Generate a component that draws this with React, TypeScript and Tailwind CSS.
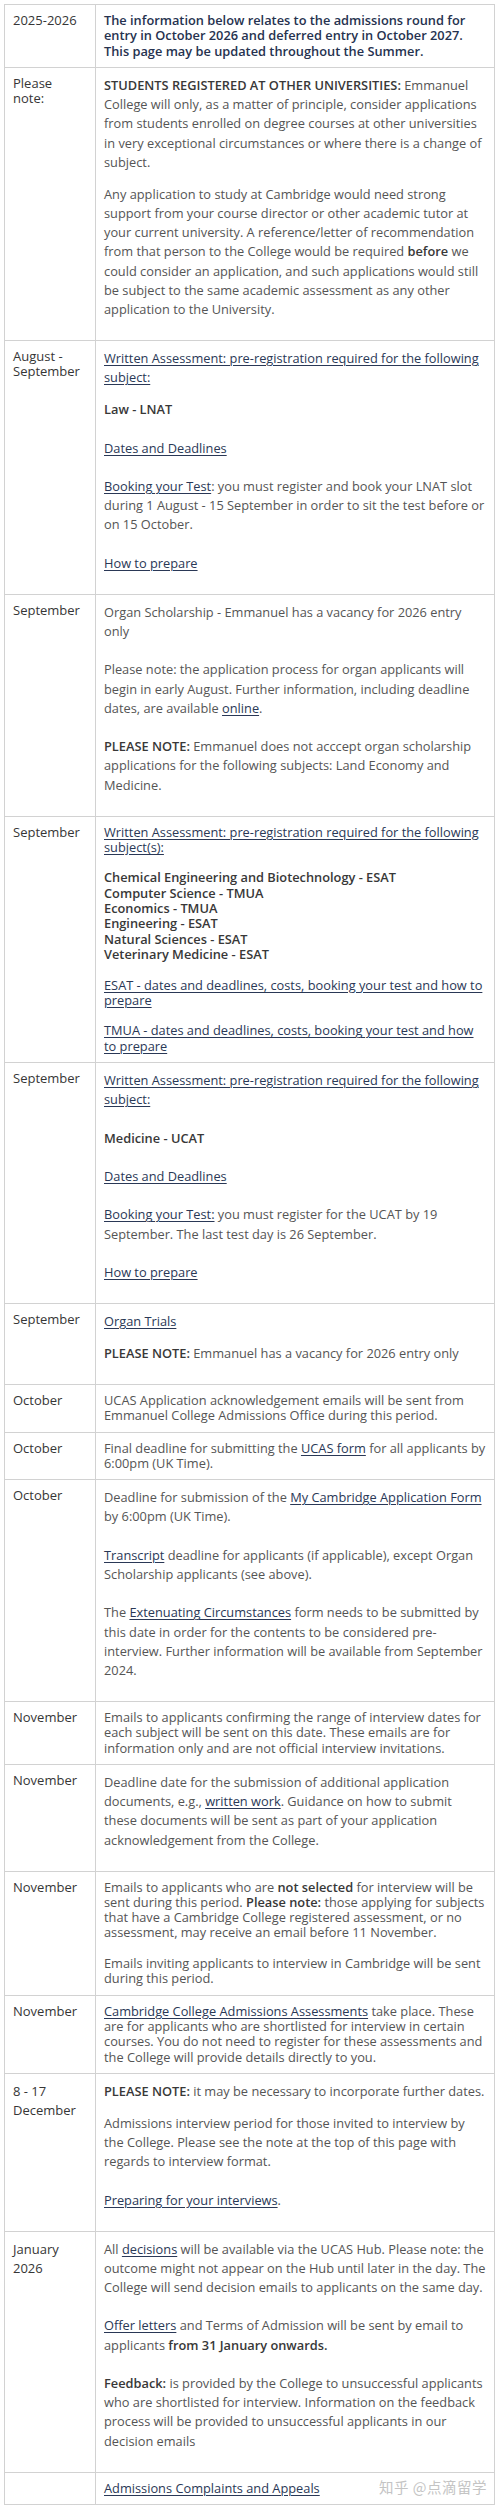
import React from 'react';

const A = ({ children }: { children: React.ReactNode }) => (
  <a href="#" className="text-[#2a3856] underline underline-offset-[2px] decoration-[1px]">
    {children}
  </a>
);

const B = ({ children }: { children: React.ReactNode }) => (
  <strong className="font-semibold text-[#383838]">{children}</strong>
);

const tight = 'leading-[15.3px]';
const loose = 'leading-[19.2px]';

type Row = { label: React.ReactNode; labelLoose?: boolean; body: React.ReactNode };

const rows: Row[] = [
  {
    label: '2025-2026',
    body: (
      <div className={`${tight} font-semibold text-[#26324f]`}>
        The information below relates to the admissions round for entry in October 2026 and deferred entry in October
        2027. This page may be updated throughout the Summer.
      </div>
    ),
  },
  {
    label: (
      <>
        Please
        <br />
        note:
      </>
    ),
    body: (
      <div className={loose}>
        <p className="mb-[12.8px]">
          <B>STUDENTS REGISTERED AT OTHER UNIVERSITIES:</B> Emmanuel College will only, as a matter of principle,
          consider applications from students enrolled on degree courses at other universities in very exceptional
          circumstances or where there is a change of subject.
        </p>
        <p className="mb-[12.8px]">
          Any application to study at Cambridge would need strong support from your course director or other academic
          tutor at your current university. A reference/letter of recommendation from that person to the College would
          be required <B>before</B> we could consider an application, and such applications would still be subject to
          the same academic assessment as any other application to the University.
        </p>
      </div>
    ),
  },
  {
    label: 'August - September',
    body: (
      <div className={loose}>
        <p className="mb-[12.8px]">
          <A>Written Assessment: pre-registration required for the following subject:</A>
        </p>
        <p className="mb-[12.8px]">
          <B>Law - LNAT</B>
          <br />
          <br />
          <A>Dates and Deadlines</A>
          <br />
          <br />
          <A>Booking your Test</A>: you must register and book your LNAT slot during 1 August - 15 September in order to
          sit the test before or on 15 October.
          <br />
          <br />
          <A>How to prepare</A>
        </p>
      </div>
    ),
  },
  {
    label: 'September',
    body: (
      <div className={loose}>
        <p className="mb-[12.8px]">
          Organ Scholarship - Emmanuel has a vacancy for 2026 entry only
          <br />
          <br />
          Please note: the application process for organ applicants will begin in early August. Further information,
          including deadline dates, are available <A>online</A>.
          <br />
          <br />
          <B>PLEASE NOTE:</B> Emmanuel does not acccept organ scholarship applications for the following subjects: Land
          Economy and Medicine.
        </p>
      </div>
    ),
  },
  {
    label: 'September',
    body: (
      <div className={tight}>
        <A>Written Assessment: pre-registration required for the following subject(s):</A>
        <br />
        <br />
        <B>
          Chemical Engineering and Biotechnology - ESAT
          <br />
          Computer Science - TMUA
          <br />
          Economics - TMUA
          <br />
          Engineering - ESAT
          <br />
          Natural Sciences - ESAT
          <br />
          Veterinary Medicine - ESAT
        </B>
        <br />
        <br />
        <A>ESAT - dates and deadlines, costs, booking your test and how to prepare</A>
        <br />
        <br />
        <A>TMUA - dates and deadlines, costs, booking your test and how to prepare</A>
      </div>
    ),
  },
  {
    label: 'September',
    body: (
      <div className={loose}>
        <p className="mb-[12.8px]">
          <A>Written Assessment: pre-registration required for the following subject:</A>
          <br />
          <br />
          <B>Medicine - UCAT</B>
          <br />
          <br />
          <A>Dates and Deadlines</A>
          <br />
          <br />
          <A>Booking your Test:</A> you must register for the UCAT by 19 September. The last test day is 26 September.
          <br />
          <br />
          <A>How to prepare</A>
        </p>
      </div>
    ),
  },
  {
    label: 'September',
    body: (
      <div className={loose}>
        <p className="mb-[12.8px]">
          <A>Organ Trials</A>
        </p>
        <p className="mb-[12.8px]">
          <B>PLEASE NOTE:</B> Emmanuel has a vacancy for 2026 entry only
        </p>
      </div>
    ),
  },
  {
    label: 'October',
    body: (
      <div className={tight}>
        UCAS Application acknowledgement emails will be sent from Emmanuel College Admissions Office during this period.
      </div>
    ),
  },
  {
    label: 'October',
    body: (
      <div className={tight}>
        Final deadline for submitting the <A>UCAS form</A> for all applicants by 6:00pm (UK Time).
      </div>
    ),
  },
  {
    label: 'October',
    body: (
      <div className={loose}>
        <p className="mb-[12.8px]">
          Deadline for submission of the <A>My Cambridge Application Form</A> by 6:00pm (UK Time).
          <br />
          <br />
          <A>Transcript</A> deadline for applicants (if applicable), except Organ Scholarship applicants (see above).
          <br />
          <br />
          The <A>Extenuating Circumstances</A> form needs to be submitted by this date in order for the contents to be
          considered pre-interview. Further information will be available from September 2024.
        </p>
      </div>
    ),
  },
  {
    label: 'November',
    body: (
      <div className={tight}>
        Emails to applicants confirming the range of interview dates for each subject will be sent on this date. These
        emails are for information only and are not official interview invitations.
      </div>
    ),
  },
  {
    label: 'November',
    body: (
      <div className={loose}>
        <p className="mb-[12.8px]">
          Deadline date for the submission of additional application documents, e.g., <A>written work</A>. Guidance on
          how to submit these documents will be sent as part of your application acknowledgement from the College.
        </p>
      </div>
    ),
  },
  {
    label: 'November',
    body: (
      <div className={tight}>
        Emails to applicants who are <B>not selected</B> for interview will be sent during this period.{' '}
        <B>Please note:</B> those applying for subjects that have a Cambridge College registered assessment, or no
        assessment, may receive an email before 11 November.
        <br />
        <br />
        Emails inviting applicants to interview in Cambridge will be sent during this period.
      </div>
    ),
  },
  {
    label: 'November',
    body: (
      <div className={tight}>
        <A>Cambridge College Admissions Assessments</A> take place. These are for applicants who are shortlisted for
        interview in certain courses. You do not need to register for these assessments and the College will provide
        details directly to you.
      </div>
    ),
  },
  {
    label: '8 - 17 December',
    labelLoose: true,
    body: (
      <div className={loose}>
        <p className="mb-[12.8px]">
          <B>PLEASE NOTE:</B> it may be necessary to incorporate further dates.
        </p>
        <p className="mb-[12.8px]">
          Admissions interview period for those invited to interview by the College. Please see the note at the top of
          this page with regards to interview format.
          <br />
          <br />
          <A>Preparing for your interviews</A>.
        </p>
      </div>
    ),
  },
  {
    label: 'January 2026',
    labelLoose: true,
    body: (
      <div className={loose}>
        <p className="mb-[12.8px]">
          All <A>decisions</A> will be available via the UCAS Hub. Please note: the outcome might not appear on the Hub
          until later in the day. The College will send decision emails to applicants on the same day.
          <br />
          <br />
          <A>Offer letters</A> and Terms of Admission will be sent by email to applicants{' '}
          <B>from 31 January onwards.</B>
          <br />
          <br />
          <B>Feedback:</B> is provided by the College to unsuccessful applicants who are shortlisted for interview.
          Information on the feedback process will be provided to unsuccessful applicants in our decision emails
        </p>
      </div>
    ),
  },
  {
    label: '',
    body: (
      <div className={`${tight} relative`}>
        <A>Admissions Complaints and Appeals</A>
        <span className="absolute right-[-1px] top-[-4px] text-[14.5px] leading-[20px] text-[#c4c4c4] font-['Noto_Sans_CJK_SC',sans-serif] tracking-[0.5px]">
          知乎 @点滴留学
        </span>
      </div>
    ),
  },
];

export default function App() {
  return (
    <div className="bg-white pl-[4px] pt-[4px] pb-[3px] font-['Open_Sans',sans-serif] text-[12.8px] text-[#555]">
      <table className="w-[491px] table-fixed border-collapse">
        <colgroup>
          <col className="w-[91px]" />
          <col />
        </colgroup>
        <tbody>
          {rows.map((r, i) => (
            <tr key={i}>
              <td
                className={`border border-[#d2d2d2] align-top px-2 py-2 text-[13px] text-[#363636] ${
                  r.labelLoose ? loose : tight
                }`}
              >
                {r.label}
              </td>
              <td className="border border-[#d2d2d2] align-top px-2 py-2">{r.body}</td>
            </tr>
          ))}
        </tbody>
      </table>
    </div>
  );
}
